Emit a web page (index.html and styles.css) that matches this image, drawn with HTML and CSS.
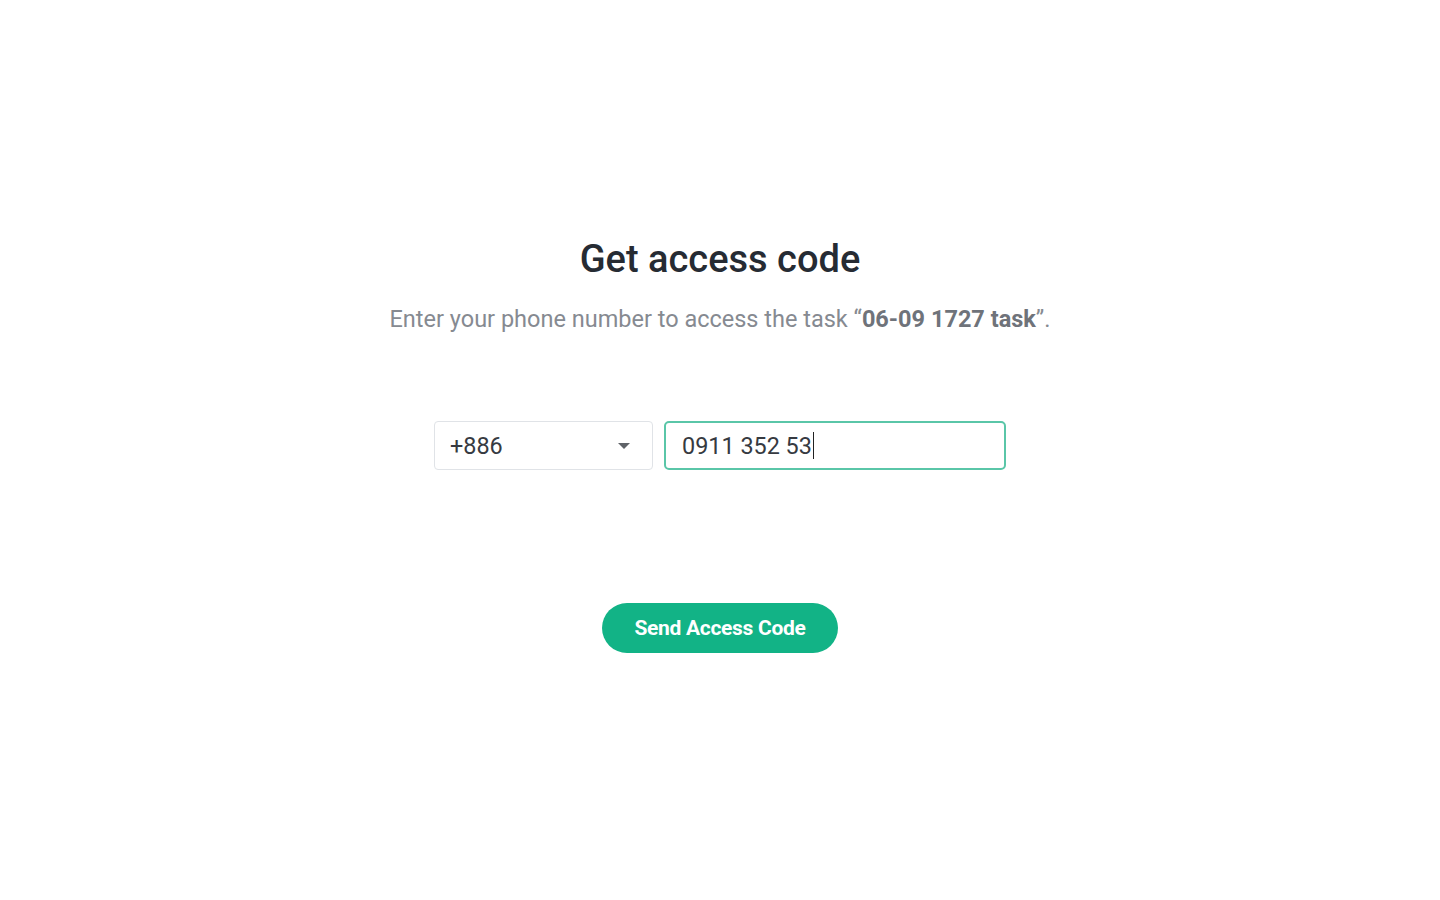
FILE: index.html
```html
<!DOCTYPE html>
<html>
<head>
<meta charset="utf-8">
<link rel="stylesheet" href="styles.css">
</head>
<body>
<main class="page">
  <h1 class="title">Get access code</h1>
  <p class="subtitle">Enter your phone number to access the task “<strong>06-09 1727 task</strong>”.</p>
  <div class="phone-row">
    <div class="select">
      <span class="select-value">+886</span>
      <svg class="caret" width="12" height="6" viewBox="0 0 12 6"><path d="M0 0 L12 0 L6 6 Z" fill="#5f6368"/></svg>
    </div>
    <div class="input">
      <span class="input-value">0911 352 53</span><span class="cursor"></span>
    </div>
  </div>
  <button class="send">Send Access Code</button>
</main>
</body>
</html>
```
FILE: styles.css
```css
html, body {
  margin: 0;
  padding: 0;
  background: #ffffff;
  font-family: Roboto, "Liberation Sans", sans-serif;
}
.page {
  display: flex;
  flex-direction: column;
  align-items: center;
  padding-top: 237px;
}
.title {
  margin: 0;
  font-size: 38px;
  font-weight: 500;
  color: #262b33;
  line-height: 44px;
}
.subtitle {
  margin: 23px 0 0;
  font-size: 23.5px;
  line-height: 30px;
  color: #868a91;
}
.subtitle strong {
  font-weight: 700;
  color: #6f737a;
}
.phone-row {
  display: flex;
  gap: 11px;
  margin-top: 87px;
}
.select {
  box-sizing: border-box;
  width: 219px;
  height: 49px;
  border: 1px solid #e0e3e7;
  border-radius: 4px;
  display: flex;
  align-items: center;
  justify-content: space-between;
  padding: 0 22px 0 15px;
}
.select-value, .input-value {
  font-size: 23.4px;
  color: #363a41;
}
.input {
  box-sizing: border-box;
  width: 342px;
  height: 49px;
  border: 2px solid #5ac6a8;
  border-radius: 5px;
  display: flex;
  align-items: center;
  padding: 0 0 0 16px;
}
.cursor {
  display: inline-block;
  width: 1px;
  height: 27px;
  background: #222;
  margin-left: 1px;
}
.send {
  margin-top: 133px;
  width: 236px;
  height: 50px;
  border: none;
  border-radius: 25px;
  background: #12b386;
  color: #ffffff;
  font-family: Roboto, "Liberation Sans", sans-serif;
  font-size: 21px;
  font-weight: 700;
  letter-spacing: -0.3px;
}
```
